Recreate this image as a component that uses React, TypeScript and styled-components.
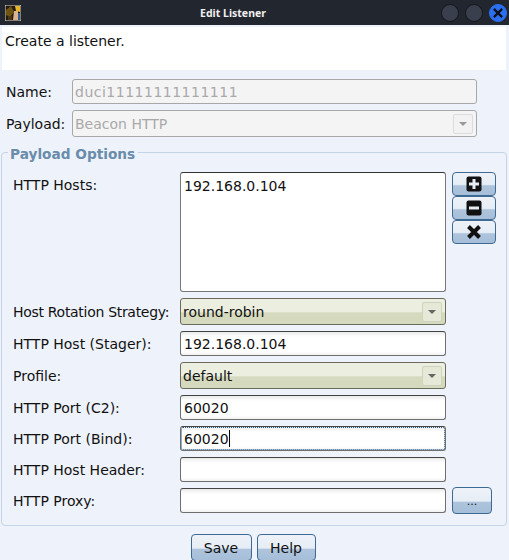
import React from "react";
import styled, { createGlobalStyle, css } from "styled-components";

const Global = createGlobalStyle`
  html, body { margin: 0; padding: 0; background: #eef2fa; }
  * { box-sizing: border-box; }
  #root { width: 509px; height: 560px; overflow: hidden; }
`;

const Win = styled.div`
  width: 509px;
  height: 560px;
  display: flex;
  flex-direction: column;
  background: #eef2fa;
  font-family: "DejaVu Sans", sans-serif;
  font-size: 14px;
  color: #111;
`;
const TitleBar = styled.div`
  height: 25px;
  flex: none;
  background: #22262f;
  display: flex;
  align-items: center;
  padding: 0 2px 0 5px;
`;
const TitleText = styled.div`
  flex: 1;
  text-align: center;
  color: #f0f0f0;
  font-family: "Noto Sans", sans-serif;
  font-weight: 700;
  font-size: 10.5px;
  padding-left: 4px;
`;
const WinButtons = styled.div`
  display: flex;
  gap: 6px;
  align-items: center;
`;
const WinDot = styled.div<{ $close?: boolean }>`
  width: 18px;
  height: 18px;
  border-radius: 50%;
  background: ${(p) => (p.$close ? "#2a6ff0" : "#3a3f4d")};
  border: 1px solid ${(p) => (p.$close ? "#2a6ff0" : "#14161c")};
  display: flex;
  align-items: center;
  justify-content: center;
`;
const Banner = styled.div`
  height: 43px;
  flex: none;
  margin: 2px 3px 0 2px;
  background: #fff;
  padding: 5px 3px;
  line-height: 18px;
`;
const TopForm = styled.div`
  display: grid;
  grid-template-columns: 66px 405px;
  row-gap: 6px;
  padding: 9px 0 0 6px;
  align-items: center;
`;
const Label = styled.label<{ $tight?: boolean }>`
  line-height: 16px;
  white-space: nowrap;
  letter-spacing: ${(p) => (p.$tight ? "-0.3px" : "0")};
`;
const fieldBase = css`
  border-radius: 3px;
  padding: 0 3px;
  display: flex;
  align-items: center;
  white-space: nowrap;
`;
const Field = styled.div<{ $h?: number; $focus?: boolean }>`
  ${fieldBase}
  height: ${(p) => p.$h ?? 25}px;
  background: linear-gradient(#e9e9e9 0, #f8f8f8 3px, #fff 5px, #fff 85%, #f1f1f1 100%);
  border: 1px solid #6e6e6e;
  border-top-color: #444;
  position: relative;
  ${(p) =>
    p.$focus &&
    css`
      outline: 1px dotted #2c5a8a;
      outline-offset: -2px;
    `}
`;
const Caret = styled.span`
  display: inline-block;
  width: 1px;
  height: 17px;
  background: #000;
`;
const DisabledField = styled.div<{ $h: number; $spaced?: boolean }>`
  ${fieldBase}
  height: ${(p) => p.$h}px;
  background: #f4f4f5;
  border: 1px solid #a8a8a8;
  color: #a9a9a9;
  justify-content: space-between;
  padding: 0 3px 0 2px;
  letter-spacing: ${(p) => (p.$spaced ? "0.5px" : "0")};
`;
const ArrowBox = styled.div<{ $disabled?: boolean }>`
  width: 20px;
  height: 20px;
  flex: none;
  border: 1px solid ${(p) => (p.$disabled ? "#dcdcdc" : "#d0d3bb")};
  border-radius: 2px;
  background: ${(p) => (p.$disabled ? "#f2f2f2" : "#e6e8d8")};
  display: flex;
  align-items: center;
  justify-content: center;
  &::after {
    content: "";
    width: 0;
    height: 0;
    border-left: 4px solid transparent;
    border-right: 4px solid transparent;
    border-top: 4px solid ${(p) => (p.$disabled ? "#999" : "#666")};
  }
`;
const Combo = styled.div`
  ${fieldBase}
  height: 27px;
  justify-content: space-between;
  background: linear-gradient(#ecefe0 0, #ecefe0 50%, #d5d9bd 56%, #d5d9bd 100%);
  border: 1px solid #6b6b5c;
  padding: 0 3px 0 2px;
`;
const Panel = styled.fieldset`
  margin: 5px 2px 0 1px;
  padding: 0 0 0 11px;
  height: 384px;
  flex: none;
  border: 1px solid #c4d3e6;
  border-radius: 4px;
  position: relative;
  min-width: 0;
`;
const Legend = styled.legend`
  font-weight: 700;
  font-size: 13.7px;
  color: #6a8cab;
  padding: 4px 3px 0 2px;
  margin-left: -5px;
  line-height: 16px;
`;
const Grid = styled.div`
  display: grid;
  grid-template-columns: 161px 266px auto;
  grid-template-rows: 120px 27px 25px 27px 25px 25px 25px 25px;
  row-gap: 6px;
  column-gap: 6px;
  margin-top: 10px;
  align-items: center;
`;
const HostsArea = styled.div`
  height: 120px;
  background: #fff;
  border: 1px solid #777;
  border-top-color: #333;
  border-radius: 3px;
  padding: 5px 3px;
  line-height: 16px;
`;
const TopLabel = styled(Label)`
  align-self: start;
  padding-top: 5px;
`;
const ButtonStack = styled.div`
  display: flex;
  flex-direction: column;
  align-self: start;
`;
const blueBtn = css`
  border: 1px solid #3d6a92;
  border-radius: 4px;
  background: linear-gradient(#eef2f8 0, #e6edf5 52%, #aec4dc 58%, #a6bed9 100%);
  display: flex;
  align-items: center;
  justify-content: center;
  color: #111;
  font: inherit;
  padding: 0;
`;
const IconBtn = styled.button`
  ${blueBtn}
  width: 44px;
  height: 24px;
`;
const DotsBtn = styled.button`
  ${blueBtn}
  width: 40px;
  height: 27px;
  align-items: flex-end;
  padding-bottom: 5px;
  font-size: 11px;
  line-height: 12px;
`;
const Footer = styled.div`
  display: flex;
  justify-content: center;
  gap: 5px;
  padding: 8px 0 0 0;
  margin-left: -3px;
`;
const ActionBtn = styled.button<{ $w: number }>`
  ${blueBtn}
  width: ${(p) => p.$w}px;
  height: 27px;
`;

const Square = ({ kind }: { kind: "plus" | "minus" }) => (
  <svg width="16" height="16" viewBox="0 0 16 16">
    <rect x="0.5" y="0.5" width="15" height="15" rx="2" fill="#111" />
    {kind === "plus" && <rect x="6.5" y="3" width="3" height="10" fill="#e8edf4" />}
    <rect x="3" y="6.5" width="10" height="3" fill="#e8edf4" />
  </svg>
);

const Cross = ({ size, color, w }: { size: number; color: string; w: number }) => (
  <svg width={size} height={size} viewBox="0 0 16 16">
    <path d="M2.5 2.5 L13.5 13.5 M13.5 2.5 L2.5 13.5" stroke={color} strokeWidth={w} />
  </svg>
);

const AppIcon = () => (
  <svg width="16" height="16" viewBox="0 0 16 16">
    <rect width="16" height="16" fill="#e8e4d8" />
    <rect x="0.5" y="0.5" width="15" height="15" fill="#231a12" />
    <path d="M1 5 L6 1 L9 7 L5 12 L1 10Z" fill="#6f5410" />
    <path d="M10 1 H15 V7 L11 6Z" fill="#e5b62a" />
    <path d="M9 6 H13 V15 H8Z" fill="#d9b48c" />
    <path d="M13 8 H15 V15 H13Z" fill="#3a5a8a" />
    <path d="M3 11 H7 V15 H3Z" fill="#4a3414" />
  </svg>
);

export default function App() {
  return (
    <Win>
      <Global />
      <TitleBar>
        <AppIcon />
        <TitleText>Edit Listener</TitleText>
        <WinButtons>
          <WinDot />
          <WinDot />
          <WinDot $close>
            <Cross size={12} color="#0b0f1a" w={3} />
          </WinDot>
        </WinButtons>
      </TitleBar>
      <Banner>Create a listener.</Banner>
      <TopForm>
        <Label>Name:</Label>
        <DisabledField $h={25} $spaced>duci11111111111111</DisabledField>
        <Label>Payload:</Label>
        <DisabledField $h={27}>
          Beacon HTTP
          <ArrowBox $disabled />
        </DisabledField>
      </TopForm>
      <Panel>
        <Legend>Payload Options</Legend>
        <Grid>
          <TopLabel>HTTP Hosts:</TopLabel>
          <HostsArea>192.168.0.104</HostsArea>
          <ButtonStack>
            <IconBtn>
              <Square kind="plus" />
            </IconBtn>
            <IconBtn>
              <Square kind="minus" />
            </IconBtn>
            <IconBtn>
              <Cross size={16} color="#111" w={4} />
            </IconBtn>
          </ButtonStack>

          <Label $tight>Host Rotation Strategy:</Label>
          <Combo>
            round-robin
            <ArrowBox />
          </Combo>
          <span />

          <Label>HTTP Host (Stager):</Label>
          <Field>192.168.0.104</Field>
          <span />

          <Label>Profile:</Label>
          <Combo>
            default
            <ArrowBox />
          </Combo>
          <span />

          <Label>HTTP Port (C2):</Label>
          <Field>60020</Field>
          <span />

          <Label>HTTP Port (Bind):</Label>
          <Field $focus>
            60020
            <Caret />
          </Field>
          <span />

          <Label>HTTP Host Header:</Label>
          <Field />
          <span />

          <Label>HTTP Proxy:</Label>
          <Field />
          <DotsBtn>...</DotsBtn>
        </Grid>
      </Panel>
      <Footer>
        <ActionBtn $w={61}>Save</ActionBtn>
        <ActionBtn $w={59}>Help</ActionBtn>
      </Footer>
    </Win>
  );
}
